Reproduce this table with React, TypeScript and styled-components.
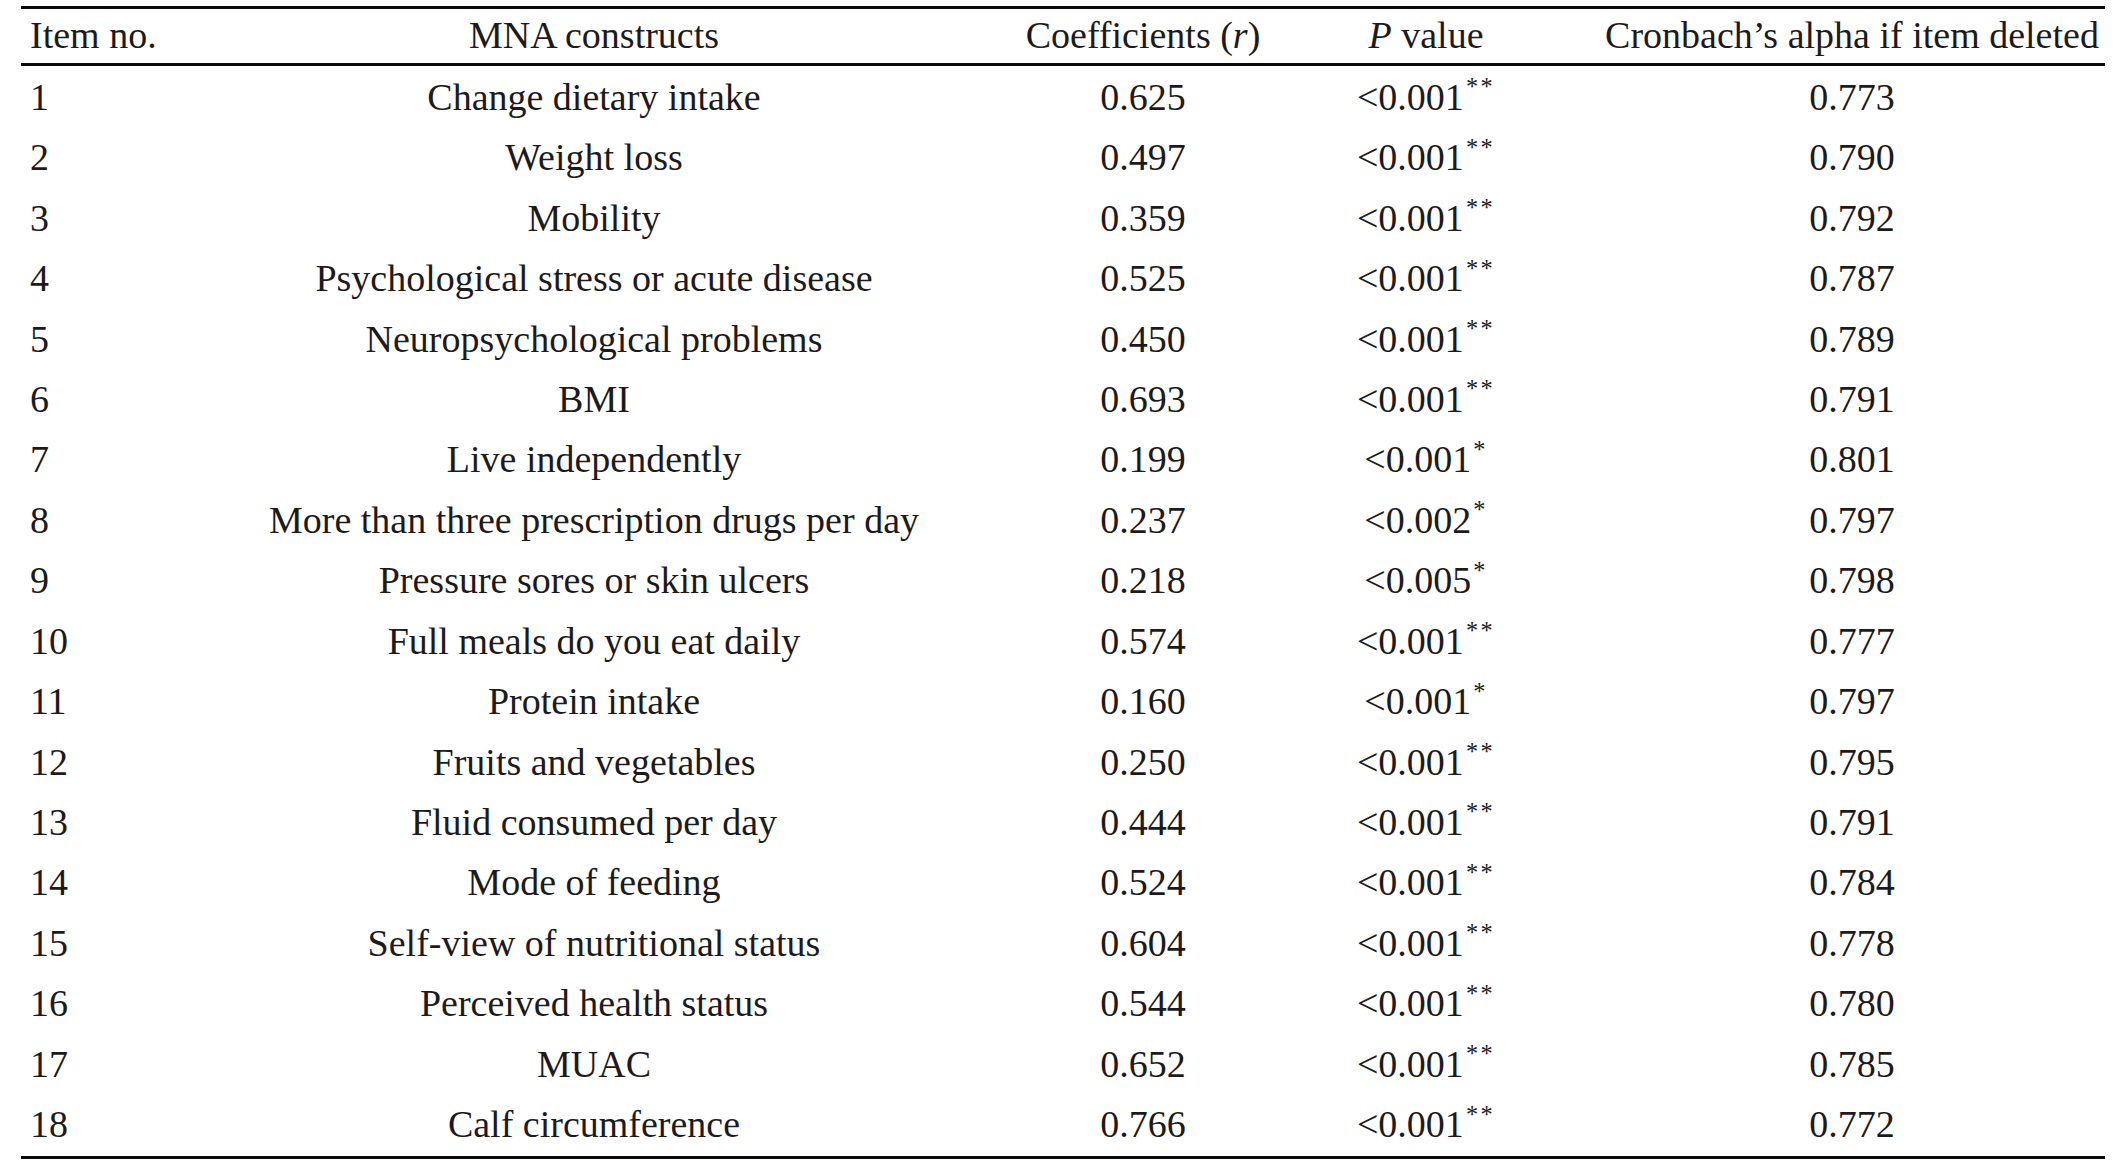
import React from "react";
import styled, { createGlobalStyle } from "styled-components";

const GlobalStyle = createGlobalStyle`
  html, body { margin: 0; padding: 0; background: #ffffff; }
  body { font-family: "Liberation Serif", "Times New Roman", serif; color: #1c1a1b; }
`;

const Page = styled.div`
  padding: 6px 8px 0 21px;
`;

const Table = styled.div`
  width: 2084px;
  border-top: 3px solid #0a0a0a;
  border-bottom: 3px solid #0a0a0a;
  font-size: 38px;
`;

const Grid = styled.div`
  display: grid;
  grid-template-columns: 159px 828px 270px 296px 531px;
`;

const HeadRow = styled(Grid)`
  border-bottom: 3px solid #0a0a0a;
  padding: 5px 0 7px;
  line-height: 42px;
`;

const Body = styled.div`
  padding-bottom: 2px;
`;

const Row = styled(Grid)`
  height: 60.45px;
  box-sizing: border-box;
  padding-top: 9.8px;
  line-height: 42px;
`;

const Cell = styled.div<{ $align?: "left" | "center"; $shift?: number }>`
  text-align: ${(p) => p.$align ?? "center"};
  padding-left: ${(p) => (p.$align === "left" ? 9 : p.$shift ?? 0)}px;
  white-space: nowrap;
`;

const Sup = styled.span`
  font-size: 0.64em;
  vertical-align: 0.6em;
  line-height: 0;
  letter-spacing: 0.1em;
  margin-left: 2px;
`;

const Ital = styled.i`
  font-style: italic;
`;

type Item = { name: string; r: string; p: string; stars: string; alpha: string };

const rows: Item[] = [
  { name: "Change dietary intake", r: "0.625", p: "<0.001", stars: "**", alpha: "0.773" },
  { name: "Weight loss", r: "0.497", p: "<0.001", stars: "**", alpha: "0.790" },
  { name: "Mobility", r: "0.359", p: "<0.001", stars: "**", alpha: "0.792" },
  { name: "Psychological stress or acute disease", r: "0.525", p: "<0.001", stars: "**", alpha: "0.787" },
  { name: "Neuropsychological problems", r: "0.450", p: "<0.001", stars: "**", alpha: "0.789" },
  { name: "BMI", r: "0.693", p: "<0.001", stars: "**", alpha: "0.791" },
  { name: "Live independently", r: "0.199", p: "<0.001", stars: "*", alpha: "0.801" },
  { name: "More than three prescription drugs per day", r: "0.237", p: "<0.002", stars: "*", alpha: "0.797" },
  { name: "Pressure sores or skin ulcers", r: "0.218", p: "<0.005", stars: "*", alpha: "0.798" },
  { name: "Full meals do you eat daily", r: "0.574", p: "<0.001", stars: "**", alpha: "0.777" },
  { name: "Protein intake", r: "0.160", p: "<0.001", stars: "*", alpha: "0.797" },
  { name: "Fruits and vegetables", r: "0.250", p: "<0.001", stars: "**", alpha: "0.795" },
  { name: "Fluid consumed per day", r: "0.444", p: "<0.001", stars: "**", alpha: "0.791" },
  { name: "Mode of feeding", r: "0.524", p: "<0.001", stars: "**", alpha: "0.784" },
  { name: "Self-view of nutritional status", r: "0.604", p: "<0.001", stars: "**", alpha: "0.778" },
  { name: "Perceived health status", r: "0.544", p: "<0.001", stars: "**", alpha: "0.780" },
  { name: "MUAC", r: "0.652", p: "<0.001", stars: "**", alpha: "0.785" },
  { name: "Calf circumference", r: "0.766", p: "<0.001", stars: "**", alpha: "0.772" },
];

export default function App() {
  return (
    <>
      <GlobalStyle />
      <Page>
        <Table>
          <HeadRow>
            <Cell $align="left">Item no.</Cell>
            <Cell>MNA constructs</Cell>
            <Cell>
              Coefficients (<Ital>r</Ital>)
            </Cell>
            <Cell>
              <Ital>P</Ital> value
            </Cell>
            <Cell $shift={25}>Cronbach’s alpha if item deleted</Cell>
          </HeadRow>
          <Body>
            {rows.map((row, i) => (
              <Row key={i}>
                <Cell $align="left">{i + 1}</Cell>
                <Cell>{row.name}</Cell>
                <Cell>{row.r}</Cell>
                <Cell>
                  {row.p}
                  <Sup>{row.stars}</Sup>
                </Cell>
                <Cell $shift={25}>{row.alpha}</Cell>
              </Row>
            ))}
          </Body>
        </Table>
      </Page>
    </>
  );
}
